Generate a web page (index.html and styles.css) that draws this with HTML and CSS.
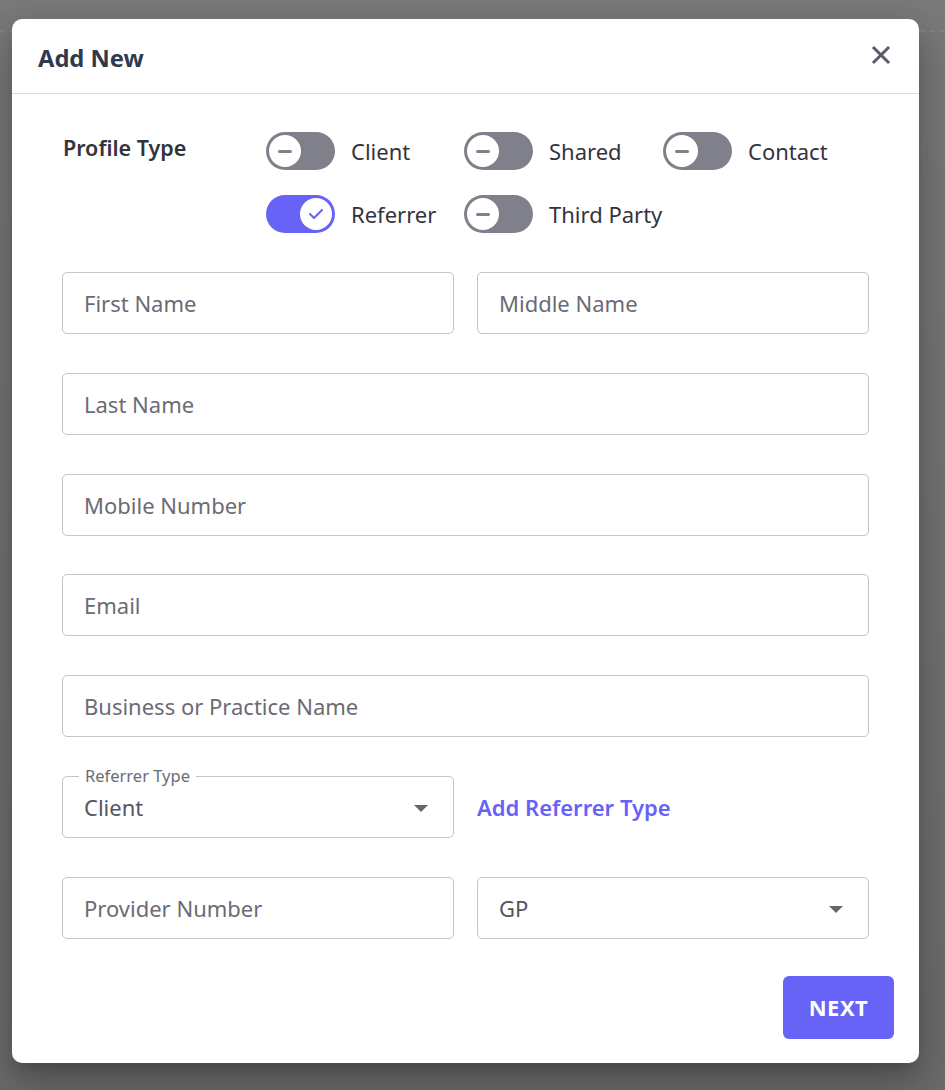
FILE: index.html
```html
<!DOCTYPE html>
<html lang="en">
<head>
  <meta charset="UTF-8">
  <meta name="viewport" content="width=device-width, initial-scale=1.0">
  <title>Add New</title>
  <link rel="stylesheet" href="styles.css">
</head>
<body>
  <div class="backdrop">
    <div class="page-lines">
      <div class="line dashed"></div>
    </div>

    <div class="modal">
      <div class="modal-header">
        <h2>Add New</h2>
        <button class="close-btn" aria-label="Close">
          <svg width="20" height="20" viewBox="0 0 20 20"><path d="M3 3 L17 17 M17 3 L3 17" stroke="#5c5c68" stroke-width="3" stroke-linecap="square"/></svg>
        </button>
      </div>

      <div class="modal-body">
        <div class="profile-row">
          <div class="profile-label">Profile Type</div>
          <div class="toggle-grid">
            <label class="toggle-item"><span class="switch"><span class="knob"><span class="dash"></span></span></span>Client</label>
            <label class="toggle-item"><span class="switch"><span class="knob"><span class="dash"></span></span></span>Shared</label>
            <label class="toggle-item"><span class="switch"><span class="knob"><span class="dash"></span></span></span>Contact</label>
            <label class="toggle-item"><span class="switch on"><span class="knob">
              <svg width="16" height="12" viewBox="0 0 16 12"><path d="M2 6 L6 10 L14 2" fill="none" stroke="#6763f7" stroke-width="2" stroke-linecap="round" stroke-linejoin="round"/></svg>
            </span></span>Referrer</label>
            <label class="toggle-item"><span class="switch"><span class="knob"><span class="dash"></span></span></span>Third Party</label>
          </div>
        </div>

        <div class="fields">
          <div class="row two">
            <div class="field">First Name</div>
            <div class="field">Middle Name</div>
          </div>
          <div class="field">Last Name</div>
          <div class="field">Mobile Number</div>
          <div class="field">Email</div>
          <div class="field">Business or Practice Name</div>
          <div class="row two">
            <div class="field select filled">
              <span class="float-label">Referrer Type</span>
              Client
              <span class="caret"></span>
            </div>
            <a class="add-link" href="#">Add Referrer Type</a>
          </div>
          <div class="row two">
            <div class="field">Provider Number</div>
            <div class="field select filled">GP<span class="caret"></span></div>
          </div>
        </div>
      </div>

      <div class="modal-footer">
        <button class="next-btn">NEXT</button>
      </div>
    </div>
  </div>
</body>
</html>
```

FILE: styles.css
```css
* {
  box-sizing: border-box;
}
body {
  margin: 0;
  font-family: "Noto Sans", "Open Sans", sans-serif;
  background-color: #747474;
  color: #33333d;
}
.backdrop {
  position: relative;
  width: 945px;
  height: 1090px;
  padding: 19px 0 0 12px;
  overflow: hidden;
  background: linear-gradient(180deg, #7a7a7a 0%, #6c6c6c 100%);
}
.page-lines .line.dashed {
  position: absolute;
  left: 0;
  right: 0;
  top: 30px;
  border-top: 2px dashed #8a8f96;
  opacity: 0.5;
}
.modal {
  position: relative;
  width: 907px;
  height: 1044px;
  background-color: #fff;
  border-radius: 10px;
  display: flex;
  flex-direction: column;
  box-shadow: 0 11px 15px -7px rgba(0,0,0,0.2), 0 24px 38px 3px rgba(0,0,0,0.14), 0 9px 46px 8px rgba(0,0,0,0.12);
}
.modal-header {
  height: 75px;
  padding: 0 26px;
  border-bottom: 1px solid #dcdcdc;
  display: flex;
  align-items: center;
  justify-content: space-between;
}
.modal-header h2 {
  margin: 0;
  font-size: 23.7px;
  font-weight: 700;
  color: #2f3a4d;
  padding-top: 3px;
}
.close-btn {
  background: none;
  border: none;
  padding: 0;
  margin-right: 2px;
  margin-top: -3px;
  cursor: pointer;
  display: flex;
}
.modal-body {
  padding: 38px 50px 0 50px;
}
.profile-row {
  display: flex;
}
.profile-label {
  width: 204px;
  padding-left: 1px;
  font-size: 21.5px;
  font-weight: 600;
  color: #33333d;
  line-height: 32px;
}
.toggle-grid {
  display: grid;
  grid-template-columns: 198px 199px 200px;
  row-gap: 25px;
}
.toggle-item {
  display: flex;
  align-items: center;
  gap: 16px;
  font-size: 22px;
  line-height: 36px;
  color: #33333d;
  height: 38px;
}
.switch {
  width: 69px;
  height: 38px;
  border-radius: 19px;
  background-color: #80808a;
  display: flex;
  align-items: center;
  padding: 0 3px;
}
.switch.on {
  background-color: #6763f7;
  justify-content: flex-end;
}
.knob {
  width: 32px;
  height: 32px;
  border-radius: 50%;
  background-color: #fff;
  display: flex;
  align-items: center;
  justify-content: center;
}
.dash {
  width: 14px;
  height: 3px;
  border-radius: 2px;
  background-color: #80808a;
}
.fields {
  margin-top: 39px;
  display: flex;
  flex-direction: column;
  gap: 38.8px;
}
.row.two {
  display: grid;
  grid-template-columns: 1fr 1fr;
  column-gap: 23px;
  align-items: center;
}
.field {
  position: relative;
  height: 62px;
  border: 1px solid #c4c4c4;
  border-radius: 5px;
  padding: 0 21px;
  display: flex;
  align-items: center;
  font-size: 22px;
  color: #6b6b76;
}
.field.filled {
  color: #55555f;
}
.float-label {
  position: absolute;
  left: 16px;
  top: -13px;
  padding: 0 6px;
  background-color: #fff;
  font-size: 16.5px;
  color: #6b6b76;
}
.caret {
  position: absolute;
  right: 25px;
  top: 28px;
  width: 0;
  height: 0;
  border-left: 7px solid transparent;
  border-right: 7px solid transparent;
  border-top: 7px solid #666;
}
.add-link {
  font-size: 22px;
  font-weight: 600;
  color: #6763f7;
  text-decoration: none;
}
.modal-footer {
  margin-top: auto;
  padding: 0 25px 24px 0;
  display: flex;
  justify-content: flex-end;
}
.next-btn {
  width: 111px;
  height: 63px;
  border: none;
  border-radius: 6px;
  background-color: #6763f7;
  color: #fff;
  font-family: "Noto Sans", "Open Sans", sans-serif;
  font-size: 22px;
  font-weight: 700;
  letter-spacing: 0.5px;
  padding-bottom: 2px;
  cursor: pointer;
}
```
